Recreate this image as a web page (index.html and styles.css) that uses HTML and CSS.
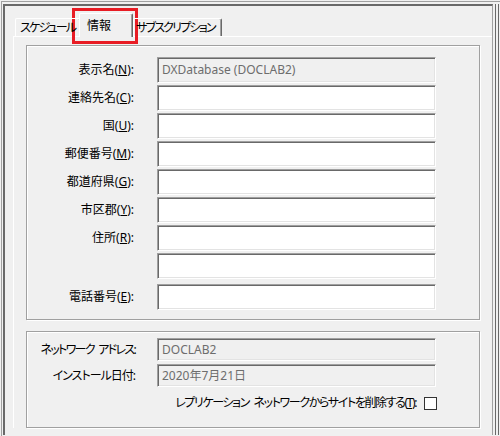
FILE: index.html
```html
<!DOCTYPE html>
<html lang="ja">
<head>
<meta charset="utf-8">
<title>プロパティ</title>
<link rel="stylesheet" href="styles.css">
</head>
<body>
<div class="outer">
  <div class="inner">
    <div class="tabs">
      <div class="tab tab-schedule">スケジュール</div>
      <div class="tab tab-info selected">情報</div>
      <div class="tab tab-sub">サブスクリプション</div>
    </div>
    <div class="pane">
      <div class="group group-main">
        <div class="form">
          <label class="lbl">表示名(<u>N</u>):</label>
          <div class="field disabled">DXDatabase (DOCLAB2)</div>
          <label class="lbl">連絡先名(<u>C</u>):</label>
          <div class="field"></div>
          <label class="lbl">国(<u>U</u>):</label>
          <div class="field"></div>
          <label class="lbl">郵便番号(<u>M</u>):</label>
          <div class="field"></div>
          <label class="lbl">都道府県(<u>G</u>):</label>
          <div class="field"></div>
          <label class="lbl">市区郡(<u>Y</u>):</label>
          <div class="field"></div>
          <label class="lbl">住所(<u>R</u>):</label>
          <div class="field"></div>
          <span class="lbl"></span>
          <div class="field"></div>
          <label class="lbl last">電話番号(<u>E</u>):</label>
          <div class="field last"></div>
        </div>
      </div>
      <div class="group group-net">
        <div class="form form-net">
          <label class="lbl lbl-addr">ネットワーク アドレス:</label>
          <div class="field disabled short">DOCLAB2</div>
          <label class="lbl lbl-date">インストール日付:</label>
          <div class="field disabled short">2020年7月21日</div>
        </div>
        <div class="check-row">
          <span class="check-label">レプリケーション ネットワークからサイトを削除する(<u>T</u>):</span>
          <span class="checkbox"></span>
        </div>
      </div>
    </div>
  </div>
</div>
<div class="highlight"></div>
</body>
</html>
```

FILE: styles.css
```css
html, body {
  margin: 0;
  padding: 0;
}

body {
  width: 500px;
  height: 436px;
  overflow: hidden;
  position: relative;
  background: #f0f0f0;
  font-family: "Noto Sans", "Noto Sans CJK JP", sans-serif;
  font-feature-settings: "palt";
  font-size: 12px;
  line-height: 16px;
  color: #000;
}

u {
  text-decoration: underline;
  text-underline-offset: 1px;
}

/* window frame */
.outer {
  margin: 1px 0 0 1px;
  border-top: 1px solid #a0a0a0;
  border-left: 1px solid #a0a0a0;
  padding: 2px 0 0 1px;
  height: 432px;
}

.inner {
  box-sizing: border-box;
  width: 490px;
  height: 431px;
  border-top: 2px solid #696969;
  border-left: 2px solid #696969;
  border-right: 1px solid #a0a0a0;
  box-shadow: 2px 0 0 #f0f0f0, 3px 0 0 #696969, 5px 0 0 #f0f0f0, 6px 0 0 #696969;
}

/* tab strip */
.tabs {
  display: flex;
  align-items: flex-end;
  height: 30px;
  padding-left: 10px;
  position: relative;
  z-index: 1;
}

.tab {
  box-sizing: border-box;
  flex: none;
  height: 18px;
  border-top: 1px solid #fff;
  border-left: 1px solid #fff;
  border-right: 1px solid #696969;
  box-shadow: inset -1px 0 #a0a0a0;
  border-radius: 2px 2px 0 0;
  padding-top: 1px;
  white-space: nowrap;
  overflow: hidden;
}

.tab-schedule {
  width: 66px;
  padding-left: 4px;
  letter-spacing: -1.8px;
}

.tab-info {
  width: 54px;
  margin-left: -2px;
  padding-left: 7px;
}

.tab-sub {
  width: 89px;
  padding-left: 2px;
  letter-spacing: -1.8px;
}

.tab.selected {
  position: relative;
  height: 24px;
  margin-bottom: -1px;
  background: #f0f0f0;
  padding-top: 4px;
}

/* tab page */
.pane {
  margin-left: 8px;
  border-top: 1px solid #fff;
  border-left: 1px solid #fff;
  padding: 8px 11px 0 12px;
}

.group {
  box-sizing: border-box;
  width: 454px;
  border: 1px solid #a0a0a0;
  box-shadow: inset 1px 1px #fff, 1px 1px #fff;
}

.group-main {
  height: 275px;
  padding-top: 11px;
}

.group-net {
  height: 97px;
  margin-top: 11px;
  padding-top: 6px;
}

.form {
  display: grid;
  grid-template-columns: 107px 279px;
  column-gap: 23px;
  row-gap: 2px;
  align-items: center;
}

.form-net {
  row-gap: 3px;
}

.lbl {
  text-align: right;
  white-space: nowrap;
}

.lbl-addr {
  letter-spacing: -1.7px;
  word-spacing: 3px;
  margin-right: -1px;
}

.lbl-date {
  letter-spacing: -1px;
  margin-right: -1px;
}

.lbl.last,
.field.last {
  margin-top: 3px;
}

.field {
  box-sizing: border-box;
  height: 26px;
  background: #fff;
  border: 1px solid;
  border-color: #a0a0a0 #fff #fff #a0a0a0;
  box-shadow: inset 1px 1px #696969, inset -1px -1px #e3e3e3;
  padding: 4px 0 0 4px;
  white-space: nowrap;
  overflow: hidden;
}

.field.disabled {
  background: #f0f0f0;
  color: #6d6d6d;
}

.field.short {
  height: 23px;
  padding-top: 3px;
}

.check-row {
  display: flex;
  justify-content: flex-end;
  align-items: center;
  gap: 8px;
  margin-top: 8px;
  padding-right: 42px;
}

.check-label {
  white-space: nowrap;
  letter-spacing: -1.4px;
  word-spacing: 3px;
}

.checkbox {
  box-sizing: border-box;
  flex: none;
  width: 13px;
  height: 13px;
  border: 1px solid #333;
  background: #fff;
}

/* red callout drawn around the active tab */
.highlight {
  position: absolute;
  left: 72px;
  top: 8px;
  width: 66px;
  height: 36px;
  box-sizing: border-box;
  border: 3px solid #e81c24;
}
```
